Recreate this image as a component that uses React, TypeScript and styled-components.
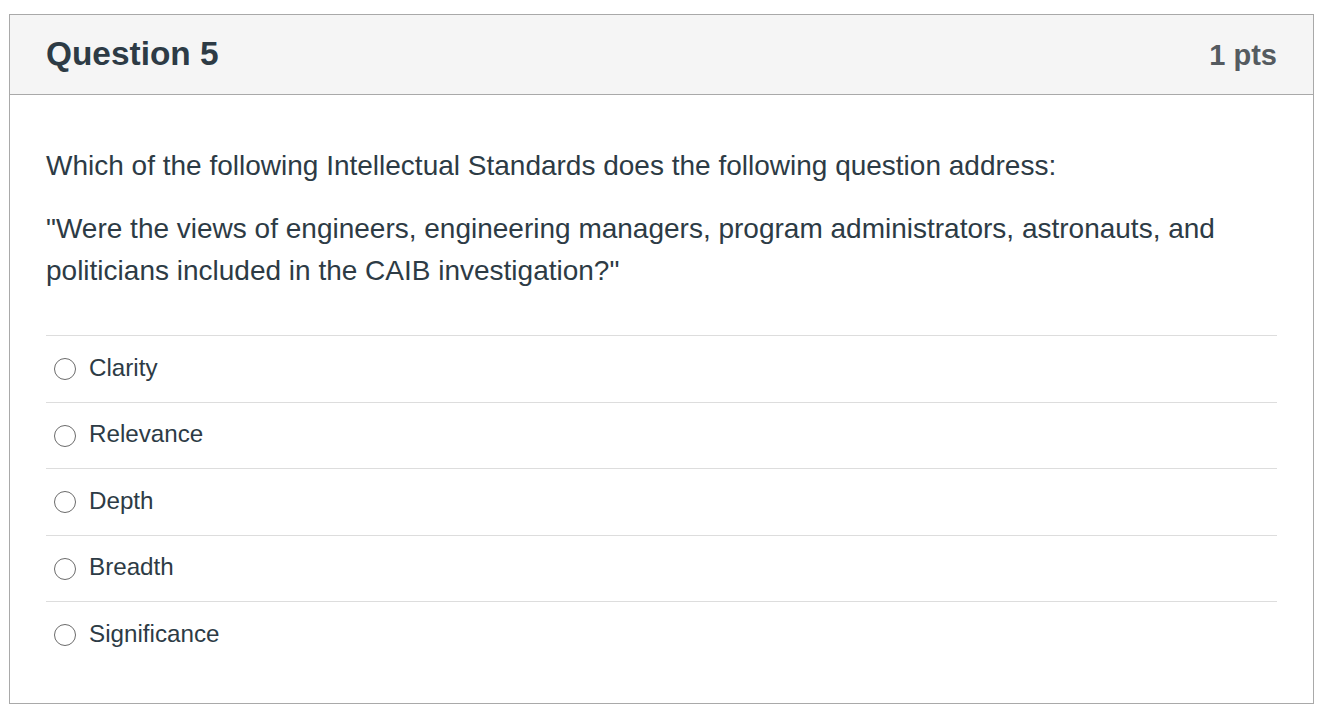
import React from "react";
import styled, { createGlobalStyle } from "styled-components";

const Global = createGlobalStyle`
  html, body { margin: 0; padding: 0; background: #ffffff; }
  body { font-family: "Liberation Sans", Arial, Helvetica, sans-serif; color: #2d3b45; }
`;

const Page = styled.div`
  padding: 14px 0 0 9px;
`;

const Card = styled.div`
  width: 1303px;
  height: 688px;
  border: 1px solid #a9a9a9;
  box-sizing: content-box;
  display: flex;
  flex-direction: column;
`;

const Header = styled.div`
  height: 80px;
  box-sizing: border-box;
  background: #f5f5f5;
  border-bottom: 1px solid #a9a9a9;
  display: flex;
  align-items: baseline;
  justify-content: space-between;
  padding: 22px 36px 0 36px;
`;

const Title = styled.h2`
  margin: 0;
  font-size: 33.4px;
  line-height: 1;
  font-weight: 700;
  color: #2d3b45;
`;

const Points = styled.div`
  font-size: 29px;
  line-height: 1;
  font-weight: 700;
  color: #555b60;
`;

const Body = styled.div`
  padding: 50px 36px 0 36px;
  display: flex;
  flex-direction: column;
`;

const Para = styled.p`
  margin: 0 0 21px 0;
  font-size: 28px;
  line-height: 42px;
  color: #2d3b45;
`;

const Answers = styled.div`
  margin-top: 22px;
  display: flex;
  flex-direction: column;
`;

const Row = styled.label`
  display: flex;
  align-items: center;
  gap: 13px;
  height: 66.5px;
  box-sizing: border-box;
  border-top: 1px solid #dddddd;
  padding: 0 0 2px 8px;
  font-size: 24.2px;
  color: #2d3b45;
`;

const Radio = styled.span`
  width: 20px;
  height: 20px;
  margin-top: 3px;
  border: 1px solid #6b6b6b;
  border-radius: 50%;
  background: #fff;
  flex: none;
`;

const options = ["Clarity", "Relevance", "Depth", "Breadth", "Significance"];

export default function App() {
  return (
    <>
      <Global />
      <Page>
        <Card>
          <Header>
            <Title>Question 5</Title>
            <Points>1 pts</Points>
          </Header>
          <Body>
            <Para>Which of the following Intellectual Standards does the following question address:</Para>
            <Para>
              "Were the views of engineers, engineering managers, program administrators, astronauts, and politicians included in the CAIB investigation?"
            </Para>
            <Answers>
              {options.map((o) => (
                <Row key={o}>
                  <Radio />
                  {o}
                </Row>
              ))}
            </Answers>
          </Body>
        </Card>
      </Page>
    </>
  );
}
